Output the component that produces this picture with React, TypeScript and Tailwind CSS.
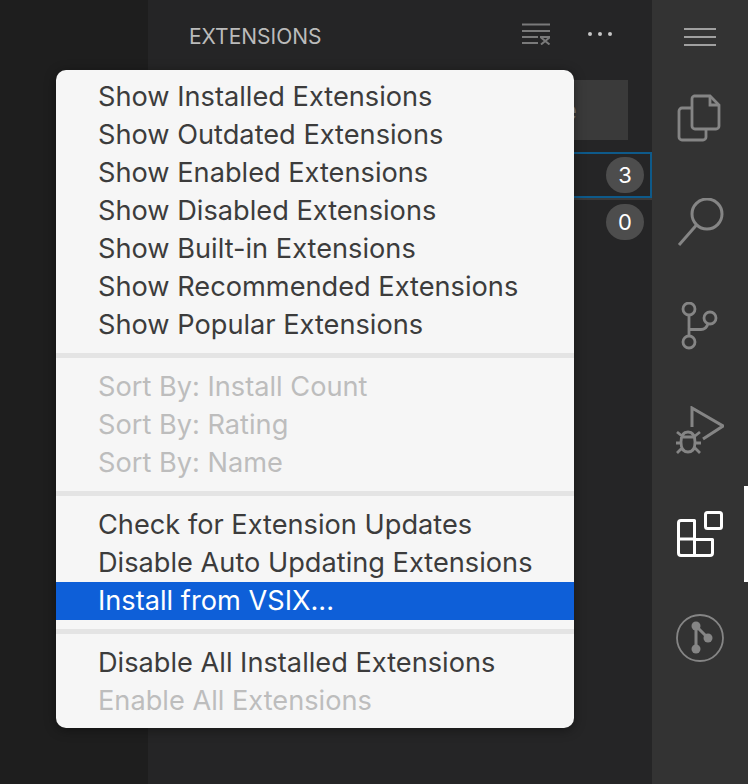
import { ReactNode } from "react";

const groups = [
	{
		items: [
			{ label: "Show Installed Extensions" },
			{ label: "Show Outdated Extensions" },
			{ label: "Show Enabled Extensions" },
			{ label: "Show Disabled Extensions" },
			{ label: "Show Built-in Extensions" },
			{ label: "Show Recommended Extensions" },
			{ label: "Show Popular Extensions" },
		],
	},
	{
		items: [
			{ label: "Sort By: Install Count", disabled: true },
			{ label: "Sort By: Rating", disabled: true },
			{ label: "Sort By: Name", disabled: true },
		],
	},
	{
		items: [
			{ label: "Check for Extension Updates" },
			{ label: "Disable Auto Updating Extensions" },
			{ label: "Install from VSIX...", active: true },
		],
	},
	{
		items: [
			{ label: "Disable All Installed Extensions" },
			{ label: "Enable All Extensions", disabled: true },
		],
	},
];

const MenuRow = ({
	label,
	disabled,
	active,
}: {
	label: string;
	disabled?: boolean;
	active?: boolean;
}) => {
	let tone = "pt-[2px] text-[#3c3c3c]";
	if (disabled) tone = "pt-[2px] text-[#bdbdbd]";
	if (active) tone = "mt-[1px] bg-[#0e5fd8] text-white";
	return (
		<div className={`flex h-[38px] items-center pl-[42px] text-[27.2px] ${tone}`}>
			{label}
		</div>
	);
};

const Slot = ({ children, active }: { children: ReactNode; active?: boolean }) => (
	<div className="relative flex h-[104px] w-full items-center justify-center">
		{active && (
			<span className="absolute right-0 top-[4px] h-[96px] w-[4px] bg-white" />
		)}
		{children}
	</div>
);

const Icon = ({ children, color = "#858585" }: { children: ReactNode; color?: string }) => (
	<svg
		width="48"
		height="48"
		viewBox="0 0 48 48"
		fill="none"
		stroke={color}
		strokeWidth="2.8"
	>
		{children}
	</svg>
);

const Badge = ({ value }: { value: number }) => (
	<span className="flex h-[36px] w-[38px] items-center justify-center rounded-full bg-[#4d4d4d] text-[22px] text-white">
		{value}
	</span>
);

export default function App() {
	return (
		<div className="relative flex h-[784px] w-[748px] overflow-hidden bg-[#1e1e1e] font-['Inter',sans-serif]">
			<div className="w-[148px] shrink-0 bg-[#1e1e1e]" />

			<div className="flex w-[504px] shrink-0 flex-col bg-[#252526]">
				<div className="flex h-[72px] items-center justify-between pl-[41px] pr-[39px]">
					<span className="pt-[2px] text-[21px] text-[#bbbbbb]">EXTENSIONS</span>
					<div className="flex items-center gap-[35px] pb-[4px]">
						<svg width="30" height="22" viewBox="0 0 30 22" fill="none" stroke="#7a7a7a" strokeWidth="2">
							<path d="M0 1.5H28M0 8H28M0 14H16M0 20H16M19 14.5L27.5 21.5M27.5 14.5L19 21.5" />
							<path d="M18 14H28" />
						</svg>
						<svg width="26" height="6" viewBox="0 0 26 6" fill="#c5c5c5">
							<circle cx="3" cy="3" r="2" />
							<circle cx="13" cy="3" r="2" />
							<circle cx="23" cy="3" r="2" />
						</svg>
					</div>
				</div>
				<div className="ml-[24px] mr-[24px] mt-[8px] flex h-[60px] items-center justify-end bg-[#3a3a3a] pr-[51px] text-[26px] text-[#808080]">
					Update
				</div>
				<div className="mt-[12px] flex h-[46px] items-center justify-end border-2 border-[#0e5a8a] pr-[6px]">
					<Badge value={3} />
				</div>
				<div className="flex h-[46px] items-center justify-end border-t-2 border-[#3a3a3a] pr-[8px]">
					<Badge value={0} />
				</div>
			</div>

			<div className="flex w-[96px] shrink-0 flex-col bg-[#333333]">
				<div className="flex h-[66px] items-start justify-center pt-[27px]">
					<svg width="32" height="20" viewBox="0 0 32 20" fill="none" stroke="#a0a0a0" strokeWidth="2">
						<path d="M0 2H32M0 10H32M0 18H32" />
					</svg>
				</div>
				<Slot>
					<Icon>
						<path d="M18 2H34L43 11V32a3 3 0 0 1-3 3H19a3 3 0 0 1-3-3V5a3 3 0 0 1 2-3Z" />
						<path d="M34 2V11H43" />
						<path d="M16 14H6a3 3 0 0 0-3 3V43a3 3 0 0 0 3 3H27a3 3 0 0 0 3-3V35" />
					</Icon>
				</Slot>
				<Slot>
					<Icon>
						<circle cx="31" cy="16" r="15" strokeWidth="3" />
						<path d="M20.5 27L3 47" strokeWidth="3" />
					</Icon>
				</Slot>
				<Slot>
					<Icon>
						<circle cx="13" cy="7" r="6" />
						<circle cx="34" cy="16" r="6" />
						<circle cx="13" cy="40" r="6" />
						<path d="M13 13V34M13 27.5H25C29 27.5 31 25 32 21.5" />
					</Icon>
				</Slot>
				<Slot>
					<Icon>
						<path d="M16 21V2L47 20L27 33" strokeWidth="3" />
						<path d="M5 36c0-7 3-10 7-10s7 3 7 10-3 10-7 10-7-3-7-10ZM5 31H19M1 26l5 4M24 26l-5 4M0 37H5M19 37H25M1 47l5-5M24 47l-5-5" />
					</Icon>
				</Slot>
				<Slot active>
					<Icon color="#ffffff">
						<rect x="29.5" y="2.5" width="16" height="16" rx="2" strokeWidth="3" />
						<path
							d="M5 10.5H18.5V29.5H36.5V43a2.5 2.5 0 0 1-2.5 2.5H5A2.5 2.5 0 0 1 2.5 43V13A2.5 2.5 0 0 1 5 10.5ZM2.5 29H18.5V45.5"
							strokeWidth="3"
							strokeLinejoin="round"
						/>
					</Icon>
				</Slot>
				<Slot>
					<Icon>
						<circle cx="24" cy="24" r="23" strokeWidth="1.8" />
						<path d="M20 12L32 24M20 12V35" strokeWidth="3" />
						<circle cx="20" cy="12" r="4.5" fill="#858585" stroke="none" />
						<circle cx="32" cy="24" r="4.5" fill="#858585" stroke="none" />
						<circle cx="20" cy="35" r="4.5" fill="#858585" stroke="none" />
					</Icon>
				</Slot>
			</div>

			<div className="absolute left-[56px] top-[70px] w-[518px] rounded-[10px] bg-[#f6f6f6] pb-[9px] pt-[7px] shadow-[0_2px_12px_rgba(0,0,0,0.4)]">
				{groups.map((group, i) => (
					<div key={group.items[0].label}>
						{i > 0 && (
							<div className={`${i === 3 ? "mb-[9px] mt-[9px]" : "mb-[9px] mt-[10px]"} h-[5px] bg-[#e4e4e4]`} />
						)}
						{group.items.map((item) => (
							<MenuRow key={item.label} {...item} />
						))}
					</div>
				))}
			</div>
		</div>
	);
}
